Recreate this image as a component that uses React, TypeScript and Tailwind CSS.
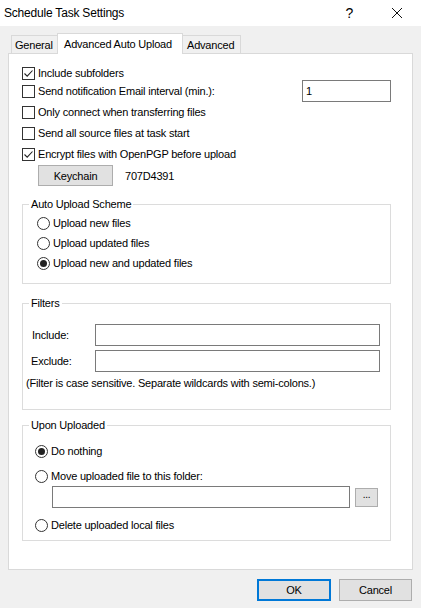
import React from "react";

const FONT = { fontFamily: '"Liberation Sans", Arial, sans-serif' };

function CheckBox({ checked }: { checked?: boolean }) {
  return (
    <span className="flex h-[13px] w-[13px] shrink-0 items-center justify-center border border-[#333333] bg-white">
      {checked && (
        <svg width="11" height="11" viewBox="0 0 11 11">
          <path d="M1.5 5.5 L4.2 8.2 L9.5 2.5" fill="none" stroke="#222" strokeWidth="1.1" />
        </svg>
      )}
    </span>
  );
}

function Radio({ checked }: { checked?: boolean }) {
  return (
    <span className="flex h-[13px] w-[13px] shrink-0 items-center justify-center rounded-full border border-[#333333] bg-white">
      {checked && <span className="h-[7px] w-[7px] rounded-full bg-[#222]" />}
    </span>
  );
}

function CheckRow({ label, checked, className = "" }: { label: string; checked?: boolean; className?: string }) {
  return (
    <div className={`flex h-[20px] items-center gap-[3px] ${className}`}>
      <CheckBox checked={checked} />
      <span>{label}</span>
    </div>
  );
}

function RadioRow({ label, checked, className = "" }: { label: string; checked?: boolean; className?: string }) {
  return (
    <div className={`flex h-[20px] items-center gap-[3px] ${className}`}>
      <Radio checked={checked} />
      <span>{label}</span>
    </div>
  );
}

function Group({ title, className = "", inner = "", children }: { title: string; className?: string; inner?: string; children: React.ReactNode }) {
  return (
    <fieldset className={`w-[369px] border border-[#dcdcdc] ${className}`}>
      <legend className="ml-[6px] px-[2px] leading-[16px]">{title}</legend>
      <div className={inner}>{children}</div>
    </fieldset>
  );
}

export default function App() {
  return (
    <div
      className="relative h-[608px] w-[421px] overflow-hidden whitespace-nowrap bg-[#f0f0f0] text-[11px] leading-[16px] tracking-[-0.2px] text-black"
      style={FONT}
    >
      {/* title bar */}
      <div className="flex h-[26px] items-center bg-white pl-[4px]">
        <span className="text-[12px]">Schedule Task Settings</span>
        <span className="ml-auto mr-[38px] text-[14px]">?</span>
        <svg width="12" height="12" viewBox="0 0 12 12" className="mr-[18px]">
          <path d="M1 1 L11 11 M11 1 L1 11" stroke="#111" strokeWidth="1" />
        </svg>
      </div>

      {/* tabs */}
      <div className="mt-[7px] flex h-[20px] items-end pl-[11px]">
        <div className="flex h-[18px] w-[46px] items-center border border-b-0 border-r-0 border-[#d9d9d9] pl-[3px]">General</div>
        <div className="relative z-10 -mb-px flex h-[21px] w-[126px] items-center border border-b-0 border-[#d9d9d9] bg-white pl-[6px]">
          Advanced Auto Upload
        </div>
        <div className="flex h-[18px] w-[58px] items-center border border-b-0 border-l-0 border-[#d9d9d9] pl-[4px]">
          Advanced
        </div>
      </div>

      {/* panel */}
      <div className="mx-[8px] h-[517px] w-[405px] border border-[#d9d9d9] bg-white pl-[13px] pt-[9px]">
        <CheckRow label="Include subfolders" checked />
        <div className="-mt-[2px] flex h-[20px] items-center">
          <CheckBox />
          <span className="ml-[3px]">Send notification Email interval (min.):</span>
          <div className="ml-auto mr-[21px] flex h-[22px] w-[89px] shrink-0 items-center border border-[#7a7a7a] bg-white pl-[3px]">
            1
          </div>
        </div>
        <CheckRow label="Only connect when transferring files" className="mt-[1px]" />
        <CheckRow label="Send all source files at task start" className="mt-[1px]" />
        <CheckRow label="Encrypt files with OpenPGP before upload" checked className="mt-[1px]" />
        <div className="mt-[1px] flex h-[21px] items-center pl-[16px]">
          <button className="flex h-[21px] w-[75px] items-center justify-center border border-[#adadad] bg-[#e1e1e1]">
            Keychain
          </button>
          <span className="ml-[12px]">707D4391</span>
        </div>

        <Group title="Auto Upload Scheme" className="mt-[10px] pb-[10px]" inner="pl-[14px]">
          <RadioRow label="Upload new files" className="mt-[1px]" />
          <RadioRow label="Upload updated files" className="h-[19px]" />
          <RadioRow label="Upload new and updated files" checked />
        </Group>

        <Group title="Filters" className="mt-[11px] pb-[18px]" inner="pl-[3px]">
          <div className="mt-[13px] flex h-[22px] items-center">
            <span className="ml-[6px] w-[63px]">Include:</span>
            <div className="h-[22px] w-[285px] border border-[#7a7a7a] bg-white" />
          </div>
          <div className="mt-[4px] flex h-[22px] items-center">
            <span className="ml-[5px] w-[64px]">Exclude:</span>
            <div className="h-[22px] w-[285px] border border-[#7a7a7a] bg-white" />
          </div>
          <div className="mt-[3px]">(Filter is case sensitive. Separate wildcards with semi-colons.)</div>
        </Group>

        <Group title="Upon Uploaded" className="mt-[7px] pb-[5px]" inner="pl-[12px]">
          <RadioRow label="Do nothing" checked className="mt-[8px]" />
          <RadioRow label="Move uploaded file to this folder:" className="mt-[5px]" />
          <div className="flex h-[22px] items-center pl-[17px]">
            <div className="h-[22px] w-[298px] border border-[#7a7a7a] bg-white" />
            <button className="ml-[5px] flex h-[19px] w-[23px] items-start justify-center border border-[#adadad] bg-[#e1e1e1] text-[10px] leading-[12px]">
              ...
            </button>
          </div>
          <RadioRow label="Delete uploaded local files" className="mt-[7px]" />
        </Group>
      </div>

      {/* buttons */}
      <div className="mt-[9px] flex justify-end gap-[8px] pr-[9px]">
        <button className="flex h-[22px] w-[74px] items-center justify-center border-2 border-[#0078d7] bg-[#e1e1e1]">OK</button>
        <button className="flex h-[22px] w-[73px] items-center justify-center border border-[#adadad] bg-[#e1e1e1]">Cancel</button>
      </div>
    </div>
  );
}
